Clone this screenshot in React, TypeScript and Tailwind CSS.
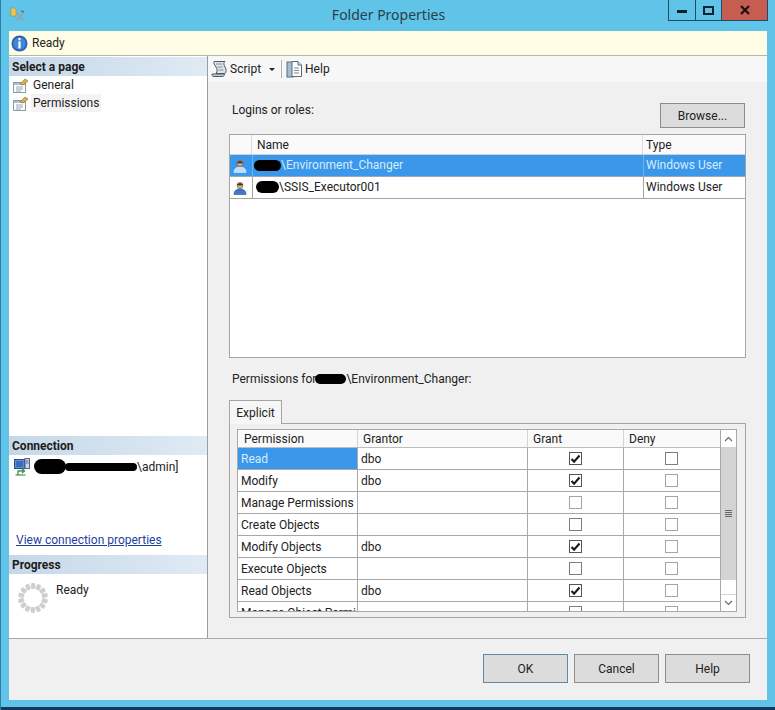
const checkRows = [
  { name: 'Read', grantor: 'dbo', grant: true, selected: true },
  { name: 'Modify', grantor: 'dbo', grant: true },
  { name: 'Manage Permissions', grantor: '', grant: false },
  { name: 'Create Objects', grantor: '', grant: false },
  { name: 'Modify Objects', grantor: 'dbo', grant: true },
  { name: 'Execute Objects', grantor: '', grant: false },
  { name: 'Read Objects', grantor: 'dbo', grant: true },
  { name: 'Manage Object Permissions', grantor: '', grant: false },
];

function FolderToolIcon() {
  return (
    <svg width="18" height="18" viewBox="0 0 18 18">
      <path d="M2 2h4l1 2v6H2z" fill="#e8c85a" stroke="#a98c2c" strokeWidth="0.6" />
      <path d="M7 15l7-8M8 7l6 8" stroke="#9aa0a5" strokeWidth="1.6" />
      <path d="M12 5l3 1" stroke="#6a7075" strokeWidth="1.4" />
    </svg>
  );
}

function InfoIcon() {
  return (
    <svg width="17" height="17" viewBox="0 0 17 17">
      <circle cx="8.5" cy="8.5" r="8" fill="#2f5fb0" />
      <circle cx="8.5" cy="8.5" r="6.2" fill="#3f86d8" />
      <rect x="7.4" y="3" width="2.2" height="2.2" fill="#fff" />
      <rect x="7.4" y="6.4" width="2.2" height="7" fill="#fff" />
    </svg>
  );
}

function PageIcon() {
  return (
    <svg width="16" height="15" viewBox="0 0 16 15">
      <rect x="0.5" y="4.5" width="12" height="10" fill="#fff" stroke="#8d99a6" />
      <rect x="1" y="5" width="11" height="2" fill="#a9c3dd" />
      <path d="M3 9h7M3 11h7M3 13h5" stroke="#9aa5b0" strokeWidth="1" />
      <path d="M7 6l5-5 3 2-5 4z" fill="#d9b04a" stroke="#8a6f22" strokeWidth="0.6" />
    </svg>
  );
}

function ScriptIcon() {
  return (
    <svg width="17" height="18" viewBox="0 0 17 18">
      <path d="M3 1.5h11c-1.5 1-1.5 3 0 5.5s1.5 5 0 6.5H5c1.5-2 1.5-4 0-6.5S2 3 3 1.5z" fill="#dfe4ea" stroke="#4d5a68" />
      <path d="M1 14h12c1 1 0 2.5-1.5 2.5H3C1.5 16.5 0.5 15 1 14z" fill="#c5ccd4" stroke="#4d5a68" />
      <path d="M5 4h6M6.5 7h5M7.5 10h5" stroke="#6c7885" strokeWidth="0.8" />
    </svg>
  );
}

function HelpBookIcon() {
  return (
    <svg width="17" height="18" viewBox="0 0 17 18">
      <rect x="1" y="2" width="6" height="15" fill="#a8bcd0" stroke="#5a6b7c" />
      <path d="M6 1.5h6l3.5 3.5v11.5H6z" fill="#fdfdfd" stroke="#5a6b7c" />
      <path d="M12 1.5V5h3.5" fill="#d5dde5" stroke="#5a6b7c" />
      <path d="M8 8h5M8 10.5h5M8 13h5" stroke="#7e8b98" />
    </svg>
  );
}

function UserIcon({ light = false }: { light?: boolean }) {
  return (
    <svg width="14" height="14" viewBox="0 0 14 14">
      <path d="M1 13.5c0-4 2.5-5.5 6-5.5s6 1.5 6 5.5z" fill={light ? '#c5dcf2' : '#3f78c4'} stroke={light ? '#e6f1fb' : '#284f88'} strokeWidth="0.6" />
      <circle cx="7" cy="4.5" r="3" fill="#d9ad84" stroke="#6a4a34" strokeWidth="0.6" />
      <path d="M4 4c.5-2.5 5.5-2.5 6 0-2 .6-4 .6-6 0z" fill="#3c3530" />
    </svg>
  );
}

function ServerIcon() {
  return (
    <svg width="17" height="19" viewBox="0 0 17 19">
      <rect x="0.5" y="2.5" width="10" height="9" fill="#5f8fd8" stroke="#2e4f8c" />
      <rect x="2" y="4" width="7" height="6" fill="#3e6bb8" />
      <rect x="11" y="1.5" width="4.5" height="10" fill="#c9d4e4" stroke="#54688a" />
      <path d="M12 4h2.5M12 6h2.5" stroke="#54688a" />
      <path d="M4 18v-4h6M8 12l2.5 2-2.5 2" fill="none" stroke="#3f9a45" strokeWidth="1.4" />
      <path d="M1.5 18h10" stroke="#3f9a45" strokeWidth="1.2" />
    </svg>
  );
}

function Spinner() {
  const dots = Array.from({ length: 14 }, (_, i) => (i * 360) / 14);
  return (
    <svg width="32" height="32" viewBox="0 0 32 32">
      {dots.map((a) => (
        <rect key={a} x="14" y="1" width="4.4" height="6" rx="1.4" fill="#cfcfcf" transform={`rotate(${a} 16 16)`} />
      ))}
    </svg>
  );
}

function Blob({ w, h, className = '' }: { w: string; h: string; className?: string }) {
  return <span className={`inline-block bg-black rounded-full align-middle ${w} ${h} ${className}`} />;
}

function SectionHeader({ children }: { children: React.ReactNode }) {
  return (
    <div className="h-[19px] flex items-center pl-[3px] font-bold text-[12px] text-[#1c1c1c] bg-gradient-to-r from-[#c6d8e8] to-[#dfeaf4]">
      {children}
    </div>
  );
}

function Checkbox({ checked, faint = false }: { checked: boolean; faint?: boolean }) {
  return (
    <span className={`w-[13px] h-[13px] bg-white border flex items-center justify-center ${checked ? 'border-[#555]' : faint ? 'border-[#a5a5a5]' : 'border-[#7d7d7d]'}`}>
      {checked && (
        <svg width="11" height="11" viewBox="0 0 11 11">
          <path d="M1.5 6l2.6 2.6L9.5 2.5" fill="none" stroke="#1a1a1a" strokeWidth="2.1" />
        </svg>
      )}
    </span>
  );
}

function FooterButton({ label, primary = false }: { label: string; primary?: boolean }) {
  return (
    <button className={`w-[85px] h-[29px] bg-[#dcdcdc] border text-[12px] text-[#222] ${primary ? 'border-[#5f87a8]' : 'border-[#8c8c8c]'}`}>
      {label}
    </button>
  );
}

export default function App() {
  return (
    <div className="w-[775px] h-[710px] overflow-hidden flex flex-col bg-[#5fc4e8] border-l border-[#2f7ea5] font-['Roboto',sans-serif] text-[12px] text-[#222]">
      {/* title bar */}
      <div className="h-[31px] shrink-0 grid grid-cols-[1fr_auto_1fr] pl-[8px] pr-[7px]">
        <div className="pt-[6px]">
          <FolderToolIcon />
        </div>
        <div className="pt-[5px] text-[14px] leading-[19px] text-[#2c3e4a] font-['Noto_Sans',sans-serif]">Folder Properties</div>
        <div className="flex justify-self-end items-start">
          <div className="w-[28px] h-[21px] border border-t-0 border-[#1d4d6c] flex items-center justify-center">
            <span className="w-[10px] h-[3px] bg-[#10202e] mt-[3px]" />
          </div>
          <div className="w-[26px] h-[21px] border border-t-0 border-l-0 border-[#1d4d6c] flex items-center justify-center">
            <span className="w-[11px] h-[9px] border-2 border-[#10202e]" />
          </div>
          <div className="w-[46px] h-[21px] border border-t-0 border-l-0 border-[#1d4d6c] bg-[#c75c50] flex items-center justify-center">
            <svg width="10" height="10" viewBox="0 0 10 10">
              <path d="M1 1l8 8M9 1l-8 8" stroke="#1a1010" strokeWidth="2.2" />
            </svg>
          </div>
        </div>
      </div>

      <div className="flex-1 min-h-0 ml-[8px] mr-[8px] bg-[#f0f0f0] flex flex-col">
        {/* status */}
        <div className="h-[25px] shrink-0 bg-[#fffde6] border-b border-[#b5b5a8] flex items-center gap-[4px] pl-[2px]">
          <InfoIcon />
          <span>Ready</span>
        </div>

        <div className="flex-1 min-h-0 flex">
          {/* sidebar */}
          <div className="w-[199px] shrink-0 bg-white border-r border-[#9c9c9c] flex flex-col pt-px">
            <SectionHeader>Select a page</SectionHeader>
            <div className="flex-1">
              <div className="h-[18px] flex items-center gap-[2px] pl-[4px]">
                <PageIcon />
                <span className="px-[2px]">General</span>
              </div>
              <div className="h-[18px] flex items-center gap-[2px] pl-[4px]">
                <PageIcon />
                <span className="bg-[#f3f3f3] px-[2px]">Permissions</span>
              </div>
            </div>
            <div className="h-[119px] flex flex-col">
              <SectionHeader>Connection</SectionHeader>
              <div className="flex-1 flex flex-col justify-between pb-[6px]">
                <div className="flex items-center pl-[5px] pt-[2px]">
                  <ServerIcon />
                  <span className="flex items-center ml-[3px]">
                    <Blob w="w-[32px]" h="h-[15px]" />
                    <Blob w="w-[72px]" h="h-[8px]" className="-ml-px" />
                    <span>\admin]</span>
                  </span>
                </div>
                <span className="pl-[7px] underline text-[#1f3f9c]">View connection properties</span>
              </div>
            </div>
            <div className="h-[83px] flex flex-col">
              <SectionHeader>Progress</SectionHeader>
              <div className="flex pl-[8px] pt-[8px] gap-[7px]">
                <Spinner />
                <span className="leading-[16px]">Ready</span>
              </div>
            </div>
          </div>

          {/* main panel */}
          <div className="flex-1 min-w-0 flex flex-col">
            <div className="h-[26px] shrink-0 bg-[#f7f7f7] flex items-center pl-[3px]">
              <ScriptIcon />
              <span className="ml-[2px]">Script</span>
              <span className="ml-[8px] w-0 h-0 border-x-[3px] border-x-transparent border-t-[3px] border-t-[#222]" />
              <span className="ml-[6px] w-px h-[18px] bg-[#b0b0b0]" />
              <span className="ml-[4px]"><HelpBookIcon /></span>
              <span className="ml-[2px]">Help</span>
            </div>

            <div className="px-[21px]">
              <div className="mt-[21px] h-[25px] flex justify-between">
                <span className="pl-[3px] leading-[14px]">Logins or roles:</span>
                <button className="w-[85px] h-[25px] mr-px bg-[#dcdcdc] border border-[#8c8c8c] text-[12px]">Browse...</button>
              </div>

              <div className="mt-[6px] h-[224px] bg-white border border-[#a5a5a5]">
                <div className="h-[20px] flex border-b border-[#cfcfcf] bg-[#fafafa]">
                  <div className="w-[21px] ml-px border-r border-[#dcdcdc]" />
                  <div className="w-[391px] pl-[5px] border-r border-[#dcdcdc] leading-[20px]">Name</div>
                  <div className="flex-1 pl-[3px] leading-[20px]">Type</div>
                </div>
                <div className="h-[22px] flex items-center bg-[#3a97ea] text-[#d6ecff] border-b border-[#9aa9b8]">
                  <div className="w-[22px] pl-[3px] flex items-center"><UserIcon light /></div>
                  <div className="w-[391px] h-full pl-px pb-px flex items-center border-l border-[#6fb1ec]">
                    <Blob w="w-[27px]" h="h-[11px]" />
                    <span>\Environment_Changer</span>
                  </div>
                  <div className="flex-1 h-full pl-[2px] pb-px flex items-center border-l border-[#6fb1ec]">Windows User</div>
                </div>
                <div className="h-[22px] flex items-center border-b border-[#a5a5a5]">
                  <div className="w-[22px] pl-[3px] flex items-center"><UserIcon /></div>
                  <div className="w-[391px] h-full pl-[3px] pb-px flex items-center border-l border-[#a5a5a5]">
                    <Blob w="w-[23px]" h="h-[12px]" />
                    <span>\SSIS_Executor001</span>
                  </div>
                  <div className="flex-1 h-full pl-[2px] pb-px flex items-center border-l border-[#a5a5a5]">Windows User</div>
                </div>
              </div>

              <div className="mt-[13px] h-[16px] pl-[3px] flex items-center">
                <span>Permissions for</span>
                <Blob w="w-[31px]" h="h-[10px]" className="-ml-px" />
                <span>\Environment_Changer:</span>
              </div>

              <div className="mt-[13px] w-[53px] h-[24px] -mb-px relative z-10 bg-[#f6f6f6] border border-b-0 border-[#a5a5a5] flex items-center justify-center">
                Explicit
              </div>
              <div className="h-[195px] border border-[#a5a5a5] pl-[7px] pt-[5px]">
                <div className="w-[500px] h-[183px] border border-[#a8a8a8] bg-white flex overflow-hidden">
                  <div className="flex-1 min-w-0">
                    <div className="h-[18px] flex bg-[#fafafa] border-b border-[#bdbdbd] leading-[18px]">
                      <div className="w-[120px] pl-[6px] border-r border-[#d5d5d5]">Permission</div>
                      <div className="w-[170px] pl-[5px] border-r border-[#d5d5d5]">Grantor</div>
                      <div className="w-[96px] pl-[5px] border-r border-[#d5d5d5]">Grant</div>
                      <div className="flex-1 pl-[5px]">Deny</div>
                    </div>
                    {checkRows.map((row) => (
                      <div key={row.name} className="h-[22px] flex border-b border-[#a8a8a8]">
                        <div className={`w-[120px] pl-[3px] border-r border-[#a8a8a8] flex items-center whitespace-nowrap overflow-hidden ${row.selected ? 'bg-[#3a97ea] text-[#d6ecff]' : ''}`}>
                          {row.name}
                        </div>
                        <div className="w-[170px] pl-[3px] border-r border-[#a8a8a8] flex items-center">{row.grantor}</div>
                        <div className="w-[96px] border-r border-[#a8a8a8] flex items-center justify-center">
                          <Checkbox checked={row.grant} faint={row.name === 'Manage Permissions'} />
                        </div>
                        <div className="flex-1 pr-[2px] flex items-center justify-center">
                          <Checkbox checked={false} faint={row.name !== 'Read'} />
                        </div>
                      </div>
                    ))}
                  </div>
                  <div className="w-[16px] shrink-0 border-l border-[#a8a8a8] flex flex-col">
                    <div className="h-[17px] bg-white flex items-center justify-center">
                      <svg width="9" height="6" viewBox="0 0 9 6"><path d="M1 5l3.5-3.5L8 5" fill="none" stroke="#666" strokeWidth="1.1" /></svg>
                    </div>
                    <div className="h-[133px] bg-[#d4d4d4] flex items-center justify-center">
                      <span className="flex flex-col gap-px">
                        <span className="w-[7px] h-px bg-[#666]" />
                        <span className="w-[7px] h-px bg-[#666]" />
                        <span className="w-[7px] h-px bg-[#666]" />
                        <span className="w-[7px] h-px bg-[#666]" />
                      </span>
                    </div>
                    <div className="flex-1 bg-white" />
                    <div className="h-[17px] bg-white border-t border-[#d4d4d4] flex items-center justify-center">
                      <svg width="9" height="6" viewBox="0 0 9 6"><path d="M1 1l3.5 3.5L8 1" fill="none" stroke="#666" strokeWidth="1.1" /></svg>
                    </div>
                  </div>
                </div>
              </div>
            </div>
          </div>
        </div>

        {/* footer */}
        <div className="h-[62px] shrink-0 border-t border-[#a9a9a9] flex justify-end items-start gap-[6px] pt-[15px] pr-[17px]">
          <FooterButton label="OK" primary />
          <FooterButton label="Cancel" />
          <FooterButton label="Help" />
        </div>
      </div>

      <div className="h-[7px] shrink-0" />
      <div className="h-[3px] shrink-0 bg-[#17385a]" />
    </div>
  );
}
